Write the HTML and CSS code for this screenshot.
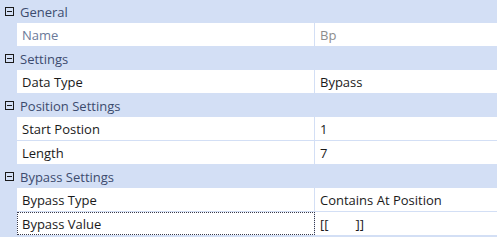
FILE: index.html
```html
<!DOCTYPE html>
<html lang="en">
<head>
  <meta charset="UTF-8" />
  <title>Properties</title>
  <link rel="stylesheet" href="styles.css">
</head>
<body>
  <div class="grid">
    <div class="cat"><span class="toggle"></span>General</div>
    <div class="row readonly"><div class="name">Name</div><div class="value">Bp</div></div>

    <div class="cat"><span class="toggle"></span>Settings</div>
    <div class="row"><div class="name">Data Type</div><div class="value">Bypass</div></div>

    <div class="cat"><span class="toggle"></span>Position Settings</div>
    <div class="row"><div class="name">Start Postion</div><div class="value">1</div></div>
    <div class="row"><div class="name">Length</div><div class="value">7</div></div>

    <div class="cat"><span class="toggle"></span>Bypass Settings</div>
    <div class="row"><div class="name">Bypass Type</div><div class="value">Contains At Position</div></div>
    <div class="row"><div class="name focus">Bypass Value</div><div class="value">[[&nbsp;&nbsp;&nbsp;&nbsp;&nbsp;&nbsp;&nbsp;&nbsp;]]</div></div>
  </div>
</body>
</html>
```

FILE: styles.css
```css
body {
  margin: 0;
  background: #fff;
  font-family: "Open Sans", "Noto Sans", sans-serif;
  font-size: 13px;
  color: #1a1a1a;
}
.grid {
  width: 497px;
  background: #d3dff5;
  padding-bottom: 1px;
}
.cat {
  height: 23px;
  display: flex;
  align-items: center;
  color: #3c4b6e;
}
.toggle {
  width: 7px;
  height: 7px;
  border: 1px solid #1a1a1a;
  margin: 0 6px 1px 5px;
  position: relative;
}
.toggle::after {
  content: "";
  position: absolute;
  left: 1px;
  top: 3px;
  width: 5px;
  height: 1px;
  background: #1a1a1a;
}
.row {
  display: flex;
  height: 23px;
  margin-left: 17px;
  border-bottom: 1px solid #d3dff5;
  background: #fff;
}
.name {
  width: 292px;
  padding-left: 5px;
  display: flex;
  align-items: center;
  border-right: 1px solid #d3dff5;
}
.value {
  flex: 1;
  padding-left: 5px;
  display: flex;
  align-items: center;
}
.readonly .name { color: #6b7a99; }
.readonly .value { color: #8c8c8c; }
.focus {
  outline: 1px dotted #3a3a4a;
  outline-offset: -1px;
}
```
